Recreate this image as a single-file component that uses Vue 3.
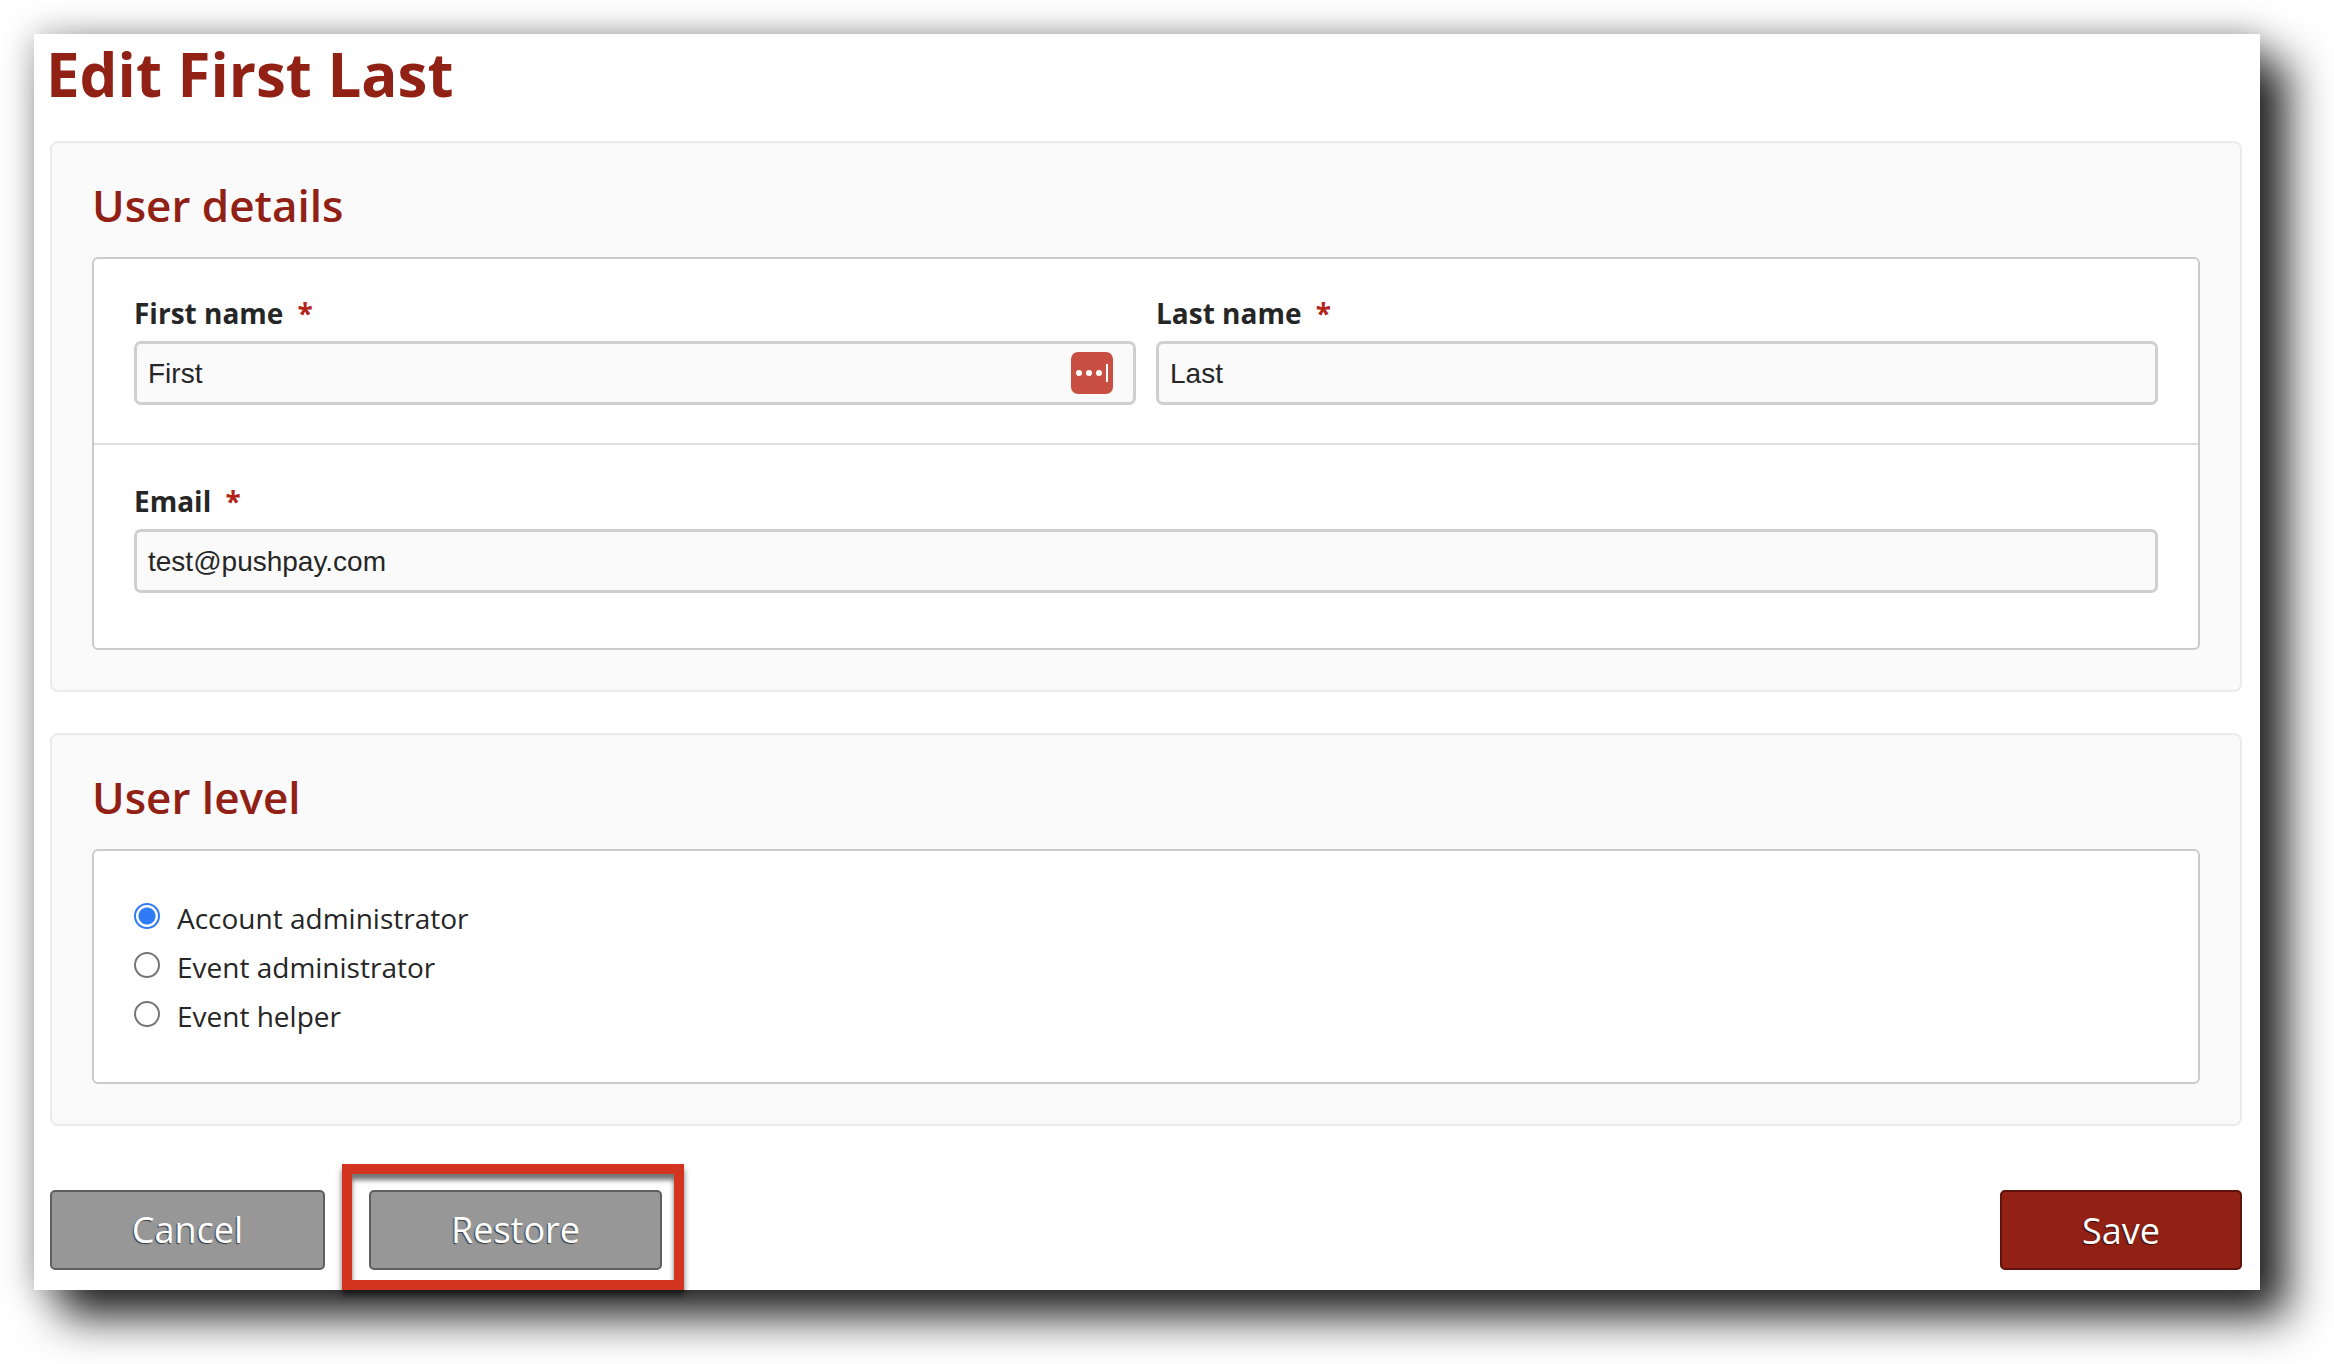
<template>
  <div class="page">
    <div class="window">
      <h1 class="title">Edit First Last</h1>

      <!-- User details -->
      <section class="panel panel--details">
        <h2 class="panel-title">User details</h2>
        <div class="box box--details">
          <div class="row row--names">
            <div class="field">
              <label class="field-label">First name <span class="req">*</span></label>
              <div class="input-wrap">
                <input class="input" type="text" value="First" />
                <span class="pw-icon">
                  <svg width="42" height="42" viewBox="0 0 42 42">
                    <circle cx="8" cy="21" r="3" fill="#fff" />
                    <circle cx="18" cy="21" r="3" fill="#fff" />
                    <circle cx="28" cy="21" r="3" fill="#fff" />
                    <rect x="35" y="12" width="2" height="18" fill="#fff" />
                  </svg>
                </span>
              </div>
            </div>
            <div class="field">
              <label class="field-label">Last name <span class="req">*</span></label>
              <input class="input" type="text" value="Last" />
            </div>
          </div>
          <div class="row row--email">
            <div class="field">
              <label class="field-label">Email <span class="req">*</span></label>
              <input class="input" type="text" value="test@pushpay.com" />
            </div>
          </div>
        </div>
      </section>

      <!-- User level -->
      <section class="panel panel--level">
        <h2 class="panel-title">User level</h2>
        <div class="box box--level">
          <label v-for="lvl in levels" :key="lvl" class="radio-row">
            <input class="radio" type="radio" name="level" :value="lvl" v-model="level" />
            <span>{{ lvl }}</span>
          </label>
        </div>
      </section>

      <div class="actions">
        <button class="btn btn--grey btn--cancel">Cancel</button>
        <div class="restore-wrap">
          <button class="btn btn--grey btn--restore">Restore</button>
          <!-- red annotation frame -->
          <div class="callout"></div>
        </div>
        <button class="btn btn--save">Save</button>
      </div>
    </div>
  </div>
</template>

<script setup>
import { ref } from 'vue'

const levels = ['Account administrator', 'Event administrator', 'Event helper']
const level = ref(levels[0])
</script>

<style>
html, body { background: #fff; }
</style>

<style scoped>
.page {
  width: 2334px;
  height: 1364px;
  padding: 34px 74px 74px 34px;
  box-sizing: border-box;
  overflow: hidden;
  font-family: "Open Sans", "Noto Sans", sans-serif;
  color: #262626;
}

.window {
  height: 1256px;
  padding: 0 18px 0 16px;
  box-sizing: border-box;
  background: #fff;
  box-shadow: 27px 27px 42px rgba(0, 0, 0, 0.85), 0 0 32px rgba(0, 0, 0, 0.3);
  display: flex;
  flex-direction: column;
}

.title {
  margin: 0 0 0 -4px;
  height: 107px;
  line-height: 80px;
  font-size: 60px;
  font-weight: 700;
  color: #912015;
}

/* ── Panels ─────────────────────────────────────────── */
.panel {
  box-sizing: border-box;
  border: 2px solid #ebebeb;
  border-radius: 8px;
  background: #fafafa;
  padding: 0 40px;
}
.panel--details { height: 551px; }
.panel--level { height: 393px; margin-top: 41px; }

.panel-title {
  margin: 0;
  height: 114px;
  line-height: 124px;
  font-size: 44px;
  font-weight: 600;
  color: #912015;
}

.box {
  box-sizing: border-box;
  border: 2px solid #cbcbcb;
  border-radius: 6px;
  background: #fff;
}
.box--details { height: 393px; }
.box--level {
  height: 235px;
  padding: 42px 40px 0;
}

.row { padding: 0 40px; }
.row--names {
  display: grid;
  grid-template-columns: 1002px 1002px;
  column-gap: 20px;
  height: 186px;
  padding-top: 29px;
  box-sizing: border-box;
  border-bottom: 2px solid #ddd;
}
.row--email { padding-top: 31px; }

.field-label {
  display: block;
  height: 53px;
  line-height: 50px;
  font-size: 28px;
  font-weight: 700;
}
.req {
  margin-left: 7px;
  color: #b3241a;
}

.input-wrap { position: relative; }

.input {
  display: block;
  width: 100%;
  height: 64px;
  box-sizing: border-box;
  padding: 2px 11px 0;
  border: 3px solid #cfcfcf;
  border-radius: 7px;
  background: #fafafa;
  font-family: "Liberation Sans", Arial, sans-serif;
  font-size: 28px;
  color: #262626;
  outline: none;
}

.pw-icon {
  position: absolute;
  top: 11px;
  right: 23px;
  width: 42px;
  height: 42px;
  border-radius: 7px;
  background: #c94f43;
}
.pw-icon svg { display: block; }

/* ── Radios ─────────────────────────────────────────── */
.radio-row {
  display: flex;
  align-items: center;
  gap: 17px;
  height: 49px;
  font-size: 28px;
}
.radio {
  appearance: none;
  width: 26px;
  height: 26px;
  margin: -4px 0 0;
  flex-shrink: 0;
  border: 2px solid #767676;
  border-radius: 50%;
  background: #fff;
}
.radio:checked {
  border-color: #2f7bf6;
  background: radial-gradient(circle, #2f7bf6 0 8px, #fff 9px);
}

/* ── Buttons ────────────────────────────────────────── */
.actions {
  display: flex;
  align-items: flex-start;
  margin-top: 64px;
}
.btn {
  height: 80px;
  box-sizing: border-box;
  border-radius: 5px;
  font-family: inherit;
  font-size: 36px;
  color: #fff;
  padding: 0;
}
.btn--grey {
  border: 2px solid #5f5f5f;
  background: #969796;
  padding-bottom: 2px;
  text-shadow: -1px 1px 1px rgba(0, 0, 0, 0.6);
}
.btn--cancel { width: 275px; }
.btn--restore { width: 293px; display: block; }
.btn--save {
  width: 242px;
  margin-left: auto;
  border: 2px solid #5f130c;
  background: #912015;
  text-shadow: -1px 1px 1px rgba(0, 0, 0, 0.6);
}

.restore-wrap {
  position: relative;
  margin-left: 44px;
}
.callout {
  position: absolute;
  left: -27px;
  top: -26px;
  width: 342px;
  height: 126px;
  box-sizing: border-box;
  border: 10px solid #d2341f;
  box-shadow: inset 0 6px 5px rgba(0, 0, 0, 0.55), 0 5px 6px rgba(0, 0, 0, 0.55);
}
</style>
